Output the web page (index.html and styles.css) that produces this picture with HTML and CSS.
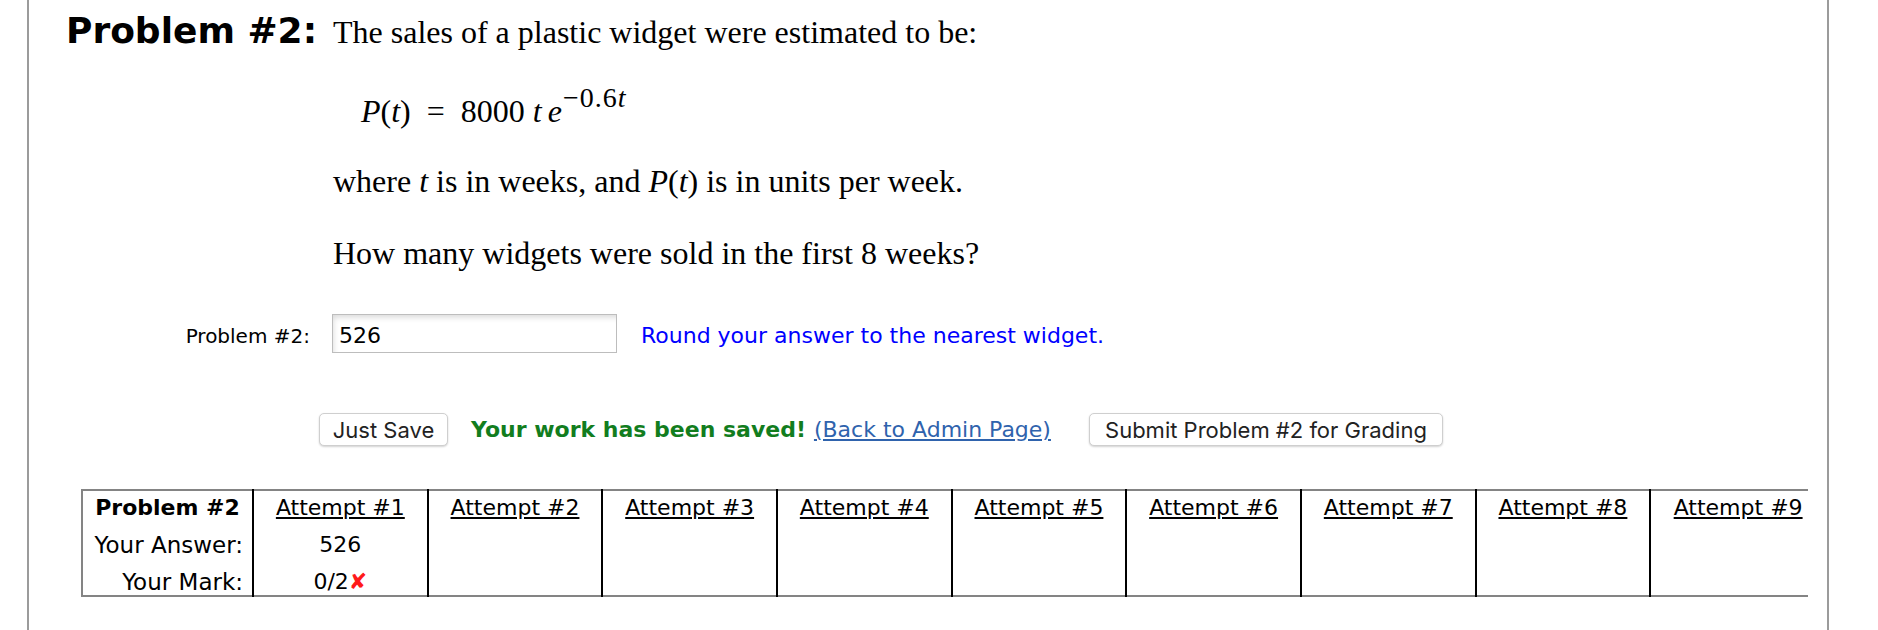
FILE: index.html
```html
<!DOCTYPE html>
<html lang="en">
<head>
<meta charset="utf-8">
<title>Problem #2</title>
<link rel="stylesheet" href="styles.css">
</head>
<body>
<div class="page">
  <div class="intro">
    <h2 class="problem-title">Problem #2:</h2>
    <div class="statement">
      <p class="line">The sales of a plastic widget were estimated to be:</p>
      <p class="formula"><i>P</i>(<i>t</i>)<span class="eq">=</span>8000<span class="thin"></span><i>t</i><span class="thin2"></span><i>e</i><sup class="exp">&minus;0.6<i>t</i></sup></p>
      <p class="line gap1">where <i>t</i> is in weeks, and <i>P</i>(<i>t</i>) is in units per week.</p>
      <p class="line gap2">How many widgets were sold in the first 8 weeks?</p>
    </div>
  </div>

  <div class="answer-row">
    <label class="answer-label" for="ans">Problem #2:</label>
    <input id="ans" class="answer-input" type="text" value="526">
    <span class="hint">Round your answer to the nearest widget.</span>
  </div>

  <div class="actions">
    <button class="btn btn-save" type="button">Just Save</button>
    <span class="saved">Your work has been saved!</span>
    <a class="admin-link" href="#">(Back to Admin Page)</a>
    <button class="btn btn-submit" type="button">Submit Problem #2 for Grading</button>
  </div>

  <div class="table-clip">
    <table class="attempts">
      <colgroup>
        <col class="col-head">
        <col><col><col><col><col><col><col><col><col>
      </colgroup>
      <tr class="r-head">
        <th>Problem #2</th>
        <td><a href="#">Attempt #1</a></td>
        <td><a href="#">Attempt #2</a></td>
        <td><a href="#">Attempt #3</a></td>
        <td><a href="#">Attempt #4</a></td>
        <td><a href="#">Attempt #5</a></td>
        <td><a href="#">Attempt #6</a></td>
        <td><a href="#">Attempt #7</a></td>
        <td><a href="#">Attempt #8</a></td>
        <td><a href="#">Attempt #9</a></td>
      </tr>
      <tr class="r-answer">
        <td class="rowlabel">Your Answer:</td>
        <td>526</td>
        <td></td><td></td><td></td><td></td><td></td><td></td><td></td><td></td>
      </tr>
      <tr class="r-mark">
        <td class="rowlabel">Your Mark:</td>
        <td>0/2<span class="wrong">&#x2718;</span></td>
        <td></td><td></td><td></td><td></td><td></td><td></td><td></td><td></td>
      </tr>
    </table>
  </div>
</div>
</body>
</html>
```

FILE: styles.css
```css
html, body {
  margin: 0;
  padding: 0;
  background: #ffffff;
}

.page {
  box-sizing: border-box;
  margin-left: 27px;
  width: 1802px;
  min-height: 630px;
  border-left: 2px solid #9b9b9b;
  border-right: 2px solid #9b9b9b;
  padding: 9px 0 0 37px;
  font-family: "DejaVu Sans", Verdana, sans-serif;
  color: #000;
}

/* ---------- statement ---------- */
.intro {
  display: flex;
  align-items: baseline;
}

.problem-title {
  flex: 0 0 267px;
  margin: 0;
  font-family: "DejaVu Sans", Verdana, sans-serif;
  font-weight: bold;
  font-size: 36px;
  line-height: 44px;
}

.statement {
  font-family: "Liberation Serif", "Times New Roman", serif;
  font-size: 32px;
  line-height: 36px;
}

.statement p {
  margin: 0;
}

.formula {
  margin-top: 43px !important;
  padding-left: 28px;
  white-space: nowrap;
}

.eq {
  margin: 0 16px;
}

.thin {
  display: inline-block;
  width: 8px;
}

.thin2 {
  display: inline-block;
  width: 6px;
}

.exp {
  font-family: "Liberation Serif", "Times New Roman", serif;
  font-size: 28px;
  letter-spacing: 1px;
  line-height: 0;
  vertical-align: 15px;
  margin-left: 1px;
}

.gap1 {
  margin-top: 34px !important;
}

.gap2 {
  margin-top: 36px !important;
}

/* ---------- answer row ---------- */
.answer-row {
  display: flex;
  align-items: baseline;
  margin-top: 43px;
}

.answer-label {
  flex: 0 0 267px;
  box-sizing: border-box;
  padding-right: 23px;
  text-align: right;
  font-size: 20px;
}

.answer-input {
  box-sizing: border-box;
  width: 285px;
  height: 39px;
  margin: 0 0 0 -1px;
  padding: 3px 6px 0 6px;
  border: 1px solid #bdbdbd;
  border-radius: 0;
  background: #fff;
  box-shadow: inset 3px 5px 6px -3px rgba(0, 0, 0, 0.16);
  font-family: "DejaVu Sans", Verdana, sans-serif;
  font-size: 22px;
  color: #000;
  outline: none;
}

.hint {
  margin-left: 24px;
  font-size: 22px;
  color: #0000ff;
}

/* ---------- actions ---------- */
.actions {
  display: flex;
  align-items: center;
  margin-top: 60px;
  padding-left: 253px;
}

.btn {
  box-sizing: border-box;
  height: 33px;
  padding: 0;
  border: 1px solid #cfcfcf;
  border-radius: 5px;
  background: #ffffff;
  box-shadow: 0 1px 2px rgba(0, 0, 0, 0.18);
  font-family: Inter, "Liberation Sans", Arial, sans-serif;
  font-size: 22px;
  color: #222;
  text-align: center;
}

.btn-save {
  width: 129px;
}

.btn-submit {
  width: 354px;
  margin-left: 38px;
}

.saved {
  margin-left: 23px;
  font-size: 22px;
  font-weight: bold;
  color: #127d1e;
}

.admin-link {
  margin-left: 8px;
  font-size: 22px;
  color: #2f63ad;
  text-decoration: underline;
}

/* ---------- attempts table ---------- */
.table-clip {
  margin-top: 43px;
  margin-left: 15px;
  width: 1727px;
  overflow: hidden;
}

.attempts {
  width: 1744px;
  table-layout: fixed;
  border-collapse: collapse;
  border-top: 2px solid #848484;
  border-bottom: 2px solid #848484;
  border-left: 2px solid #848484;
  font-size: 22px;
  line-height: 26px;
}

.col-head {
  width: 171px;
}

.attempts th,
.attempts td {
  padding: 0 9px;
  text-align: center;
  border-left: 2px solid #000;
  white-space: nowrap;
}

.attempts tr > :first-child {
  border-left: none;
}

.attempts .r-head > * {
  padding-top: 4px;
  padding-bottom: 4px;
}

.attempts .r-answer > * {
  padding-top: 7px;
  padding-bottom: 4px;
}

.attempts .r-mark > * {
  padding-top: 7px;
  padding-bottom: 0;
}

.attempts th {
  font-weight: bold;
}

.attempts td.rowlabel {
  text-align: right;
  font-size: 23px;
}

.attempts a {
  color: #000;
  text-decoration: underline;
}

.wrong {
  color: #ff1a1a;
  font-weight: bold;
}
```
